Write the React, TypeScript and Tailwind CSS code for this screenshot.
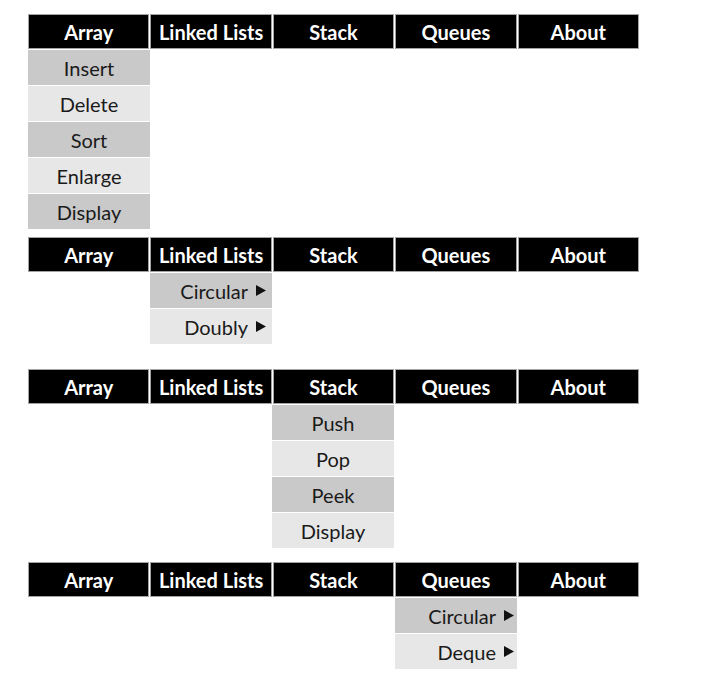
import React from "react";

const tabs = ["Array", "Linked Lists", "Stack", "Queues", "About"];

function Arrow() {
  return (
    <svg width="10" height="11" viewBox="0 0 10 11" className="inline-block">
      <path d="M0 0 L10 5.5 L0 11 Z" fill="#111" />
    </svg>
  );
}

function Bar() {
  return (
    <div className="grid grid-cols-5 gap-[1px] w-[611px]">
      {tabs.map((t) => (
        <div
          key={t}
          className="h-[35px] bg-black border border-[#a3a3a3] text-white font-bold text-[20px] flex items-center justify-center"
        >
          {t}
        </div>
      ))}
    </div>
  );
}

type Item = { label: string; arrow?: boolean };

function Drop({ items, offset, pr }: { items: Item[]; offset: string; pr?: string }) {
  return (
    <div className={`flex flex-col gap-[1px] mt-[1px] w-[122px] ${offset}`}>
      {items.map((it, i) => (
        <div
          key={it.label}
          className={`h-[35px] text-[20px] text-[#1a1a1a] flex items-center ${
            i % 2 === 0 ? "bg-[#c9c9c9]" : "bg-[#e7e7e7]"
          } ${it.arrow ? "justify-end gap-[8px] " + (pr ?? "pr-[7px]") : "justify-center"}`}
        >
          <span>{it.label}</span>
          {it.arrow && <Arrow />}
        </div>
      ))}
    </div>
  );
}

export default function App() {
  return (
    <div
      className="bg-white w-[713px] h-[692px] pl-[28px] pt-[14px]"
      style={{ fontFamily: "Lato, 'Noto Sans', sans-serif" }}
    >
      <Bar />
      <Drop
        offset="ml-0"
        items={[
          { label: "Insert" },
          { label: "Delete" },
          { label: "Sort" },
          { label: "Enlarge" },
          { label: "Display" },
        ]}
      />
      <div className="mt-[8px]">
        <Bar />
      </div>
      <Drop
        offset="ml-[122px]"
        pr="pr-[6px]"
        items={[
          { label: "Circular", arrow: true },
          { label: "Doubly", arrow: true },
        ]}
      />
      <div className="mt-[25px]">
        <Bar />
      </div>
      <Drop
        offset="ml-[244px]"
        items={[
          { label: "Push" },
          { label: "Pop" },
          { label: "Peek" },
          { label: "Display" },
        ]}
      />
      <div className="mt-[14px]">
        <Bar />
      </div>
      <Drop
        offset="ml-[367px]"
        pr="pr-[3px]"
        items={[
          { label: "Circular", arrow: true },
          { label: "Deque", arrow: true },
        ]}
      />
    </div>
  );
}
